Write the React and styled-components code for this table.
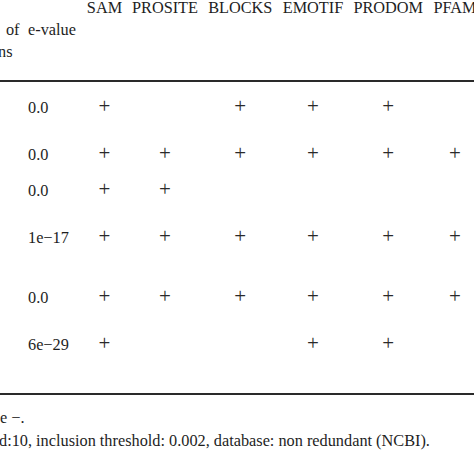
import React from "react";
import styled, { createGlobalStyle } from "styled-components";

const GlobalStyle = createGlobalStyle`
  html, body {
    margin: 0;
    padding: 0;
    background: #fff;
  }
`;

const Page = styled.div`
  width: 474px;
  height: 474px;
  overflow: hidden;
  font-family: "Liberation Serif", "Times New Roman", serif;
  font-size: 16.3px;
  line-height: 22px;
  color: #1e1e1e;
`;

const Table = styled.table`
  border-collapse: collapse;
  table-layout: fixed;
  width: 532px;
  margin: -3.5px 0 0 -50px;
  white-space: nowrap;
  font-family: "Liberation Serif", "Times New Roman", serif;
  font-size: 16.3px;
  line-height: 22px;
  color: #1e1e1e;
`;

const HeadCell = styled.th`
  box-sizing: border-box;
  width: ${(p) => p.$w}px;
  font-weight: normal;
  font-size: 16.3px;
  line-height: 22px;
  text-align: ${(p) => (p.$left ? "left" : "center")};
  vertical-align: top;
  padding: ${(p) => (p.$drop ? "22px" : "0")} 0 17.5px ${(p) => p.$inset || 0}px;
  border-bottom: 2px solid #2a2a2a;
`;

const HeadLine = styled.span`
  display: block;
  margin-left: ${(p) => p.$shift || 0}px;
  word-spacing: ${(p) => p.$spread || 0}px;
`;

const Row = styled.tr`
  & > td {
    padding-top: ${(p) => p.$gap}px;
    padding-bottom: ${(p) => (p.$last ? 37.1 : 0)}px;
    border-bottom: ${(p) => (p.$last ? "2px solid #2a2a2a" : "none")};
  }
`;

const Cell = styled.td`
  font-size: 16.3px;
  line-height: 22px;
  text-align: ${(p) => (p.$left ? "left" : "center")};
  padding-left: 0;
  padding-right: 0;
  vertical-align: top;
`;

const Mark = styled.span`
  font-size: 21px;
  line-height: 0;
  color: #2a2a2a;
`;

const Notes = styled.div`
  margin-top: 11px;
  line-height: 23px;
`;

const Note = styled.div`
  margin-left: ${(p) => p.$shift}px;
`;

const dbs = [
  { name: "SAM", w: 45 },
  { name: "PROSITE", w: 76 },
  { name: "BLOCKS", w: 74.5 },
  { name: "EMOTIF", w: 71 },
  { name: "PRODOM", w: 79.5 },
  { name: "PFAM", w: 54 },
];

const rows = [
  { ev: "0.0", gap: 15.4, marks: [1, 0, 1, 1, 1, 0] },
  { ev: "0.0", gap: 24.5, marks: [1, 1, 1, 1, 1, 1] },
  { ev: "0.0", gap: 14, marks: [1, 1, 0, 0, 0, 0] },
  { ev: "1e\u221217", gap: 25, marks: [1, 1, 1, 1, 1, 1] },
  { ev: "0.0", gap: 38.5, marks: [1, 1, 1, 1, 1, 1] },
  { ev: "6e\u221229", gap: 24.5, marks: [1, 0, 0, 1, 1, 0] },
];

export default function App() {
  return (
    <Page>
      <GlobalStyle />
      <Table>
        <thead>
          <tr>
            <HeadCell $left $drop $w={78} $inset={2}>
              <HeadLine $shift={-8} $spread={4.5}>
                Number of
              </HeadLine>
              <HeadLine>iterations</HeadLine>
            </HeadCell>
            <HeadCell $left $drop $w={54}>
              e-value
            </HeadCell>
            {dbs.map((d) => (
              <HeadCell key={d.name} $w={d.w}>
                {d.name}
              </HeadCell>
            ))}
          </tr>
        </thead>
        <tbody>
          {rows.map((r, i) => (
            <Row key={i} $gap={r.gap} $last={i === rows.length - 1}>
              <Cell $left />
              <Cell $left>{r.ev}</Cell>
              {r.marks.map((m, j) => (
                <Cell key={j}>{m ? <Mark>+</Mark> : null}</Cell>
              ))}
            </Row>
          ))}
        </tbody>
      </Table>
      <Notes>
        <Note $shift={0}>e &minus;.</Note>
        <Note $shift={-1}>
          d:10, inclusion threshold: 0.002, database: non redundant (NCBI).
        </Note>
      </Notes>
    </Page>
  );
}
